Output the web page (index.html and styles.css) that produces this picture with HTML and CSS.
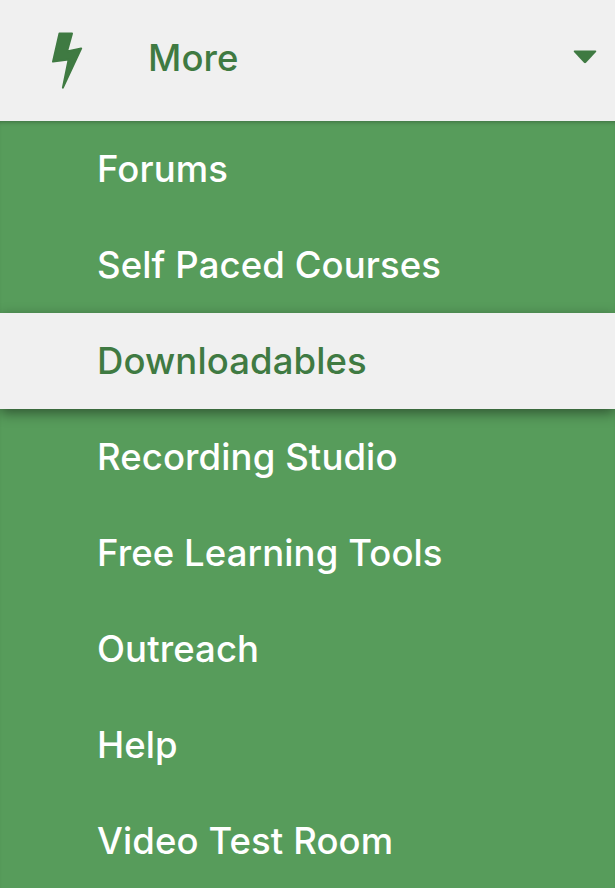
FILE: index.html
```html
<!DOCTYPE html>
<html lang="en">
<head>
<meta charset="utf-8">
<title>More</title>
<link rel="stylesheet" href="styles.css">
</head>
<body>
<nav class="nav">
  <div class="head">
    <svg class="bolt" viewBox="0 0 32 58" aria-hidden="true"><path d="M8.4 1.6 H21 L16 19.6 L30.2 16.4 L11.9 55.6 L17.6 27.6 L2 29.6 Z"/></svg>
    <span class="head-label">More</span>
    <svg class="caret" viewBox="0 0 24 14" aria-hidden="true"><path d="M1.5 0.5 H22.5 Q24 0.5 23 2 L13 12.7 Q12 13.6 11 12.7 L1 2 Q0 0.5 1.5 0.5 Z"/></svg>
  </div>
  <ul class="menu">
    <li class="item">Forums</li>
    <li class="item">Self Paced Courses</li>
    <li class="item active">Downloadables</li>
    <li class="item">Recording Studio</li>
    <li class="item">Free Learning Tools</li>
    <li class="item">Outreach</li>
    <li class="item">Help</li>
    <li class="item">Video Test Room</li>
  </ul>
</nav>
</body>
</html>
```
FILE: styles.css
```css
* { box-sizing: border-box; }
html, body { margin: 0; padding: 0; height: 100%; overflow: hidden; }
body { background: #579c5b; font-family: Inter, "Liberation Sans", sans-serif; font-optical-sizing: none; font-variation-settings: "opsz" 14; }
.nav { display: flex; flex-direction: column; }
.head {
  height: 121px;
  background: #f0f0f0;
  color: #3f7a42;
  display: flex;
  align-items: center;
  padding: 0 18px 6px 51px;
}
.bolt { width: 32px; height: 58px; fill: #3f7a42; stroke: #3f7a42; stroke-width: 2; stroke-linejoin: round; flex: none; margin-top: 6px; }
.head-label { margin-left: 65px; font-size: 36.5px; font-weight: 450; letter-spacing: 0.1px; flex: 1; }
.caret { width: 24px; height: 14px; fill: #3f7a42; flex: none; margin-bottom: 1px; }
.menu {
  list-style: none;
  margin: 0;
  padding: 0;
  background: #579c5b;
  box-shadow: inset 0 4px 4px -3px rgba(0,0,0,.3);
}
.item {
  height: 96px;
  display: flex;
  align-items: center;
  padding-left: 97px;
  color: #fff;
  font-size: 36.5px;
  font-weight: 450;
  letter-spacing: 0.1px;
}
.item.active {
  background: #f0f0f0;
  color: #3f7a42;
  position: relative;
  box-shadow: 0 4px 12px rgba(0,0,0,.45);
}
```
